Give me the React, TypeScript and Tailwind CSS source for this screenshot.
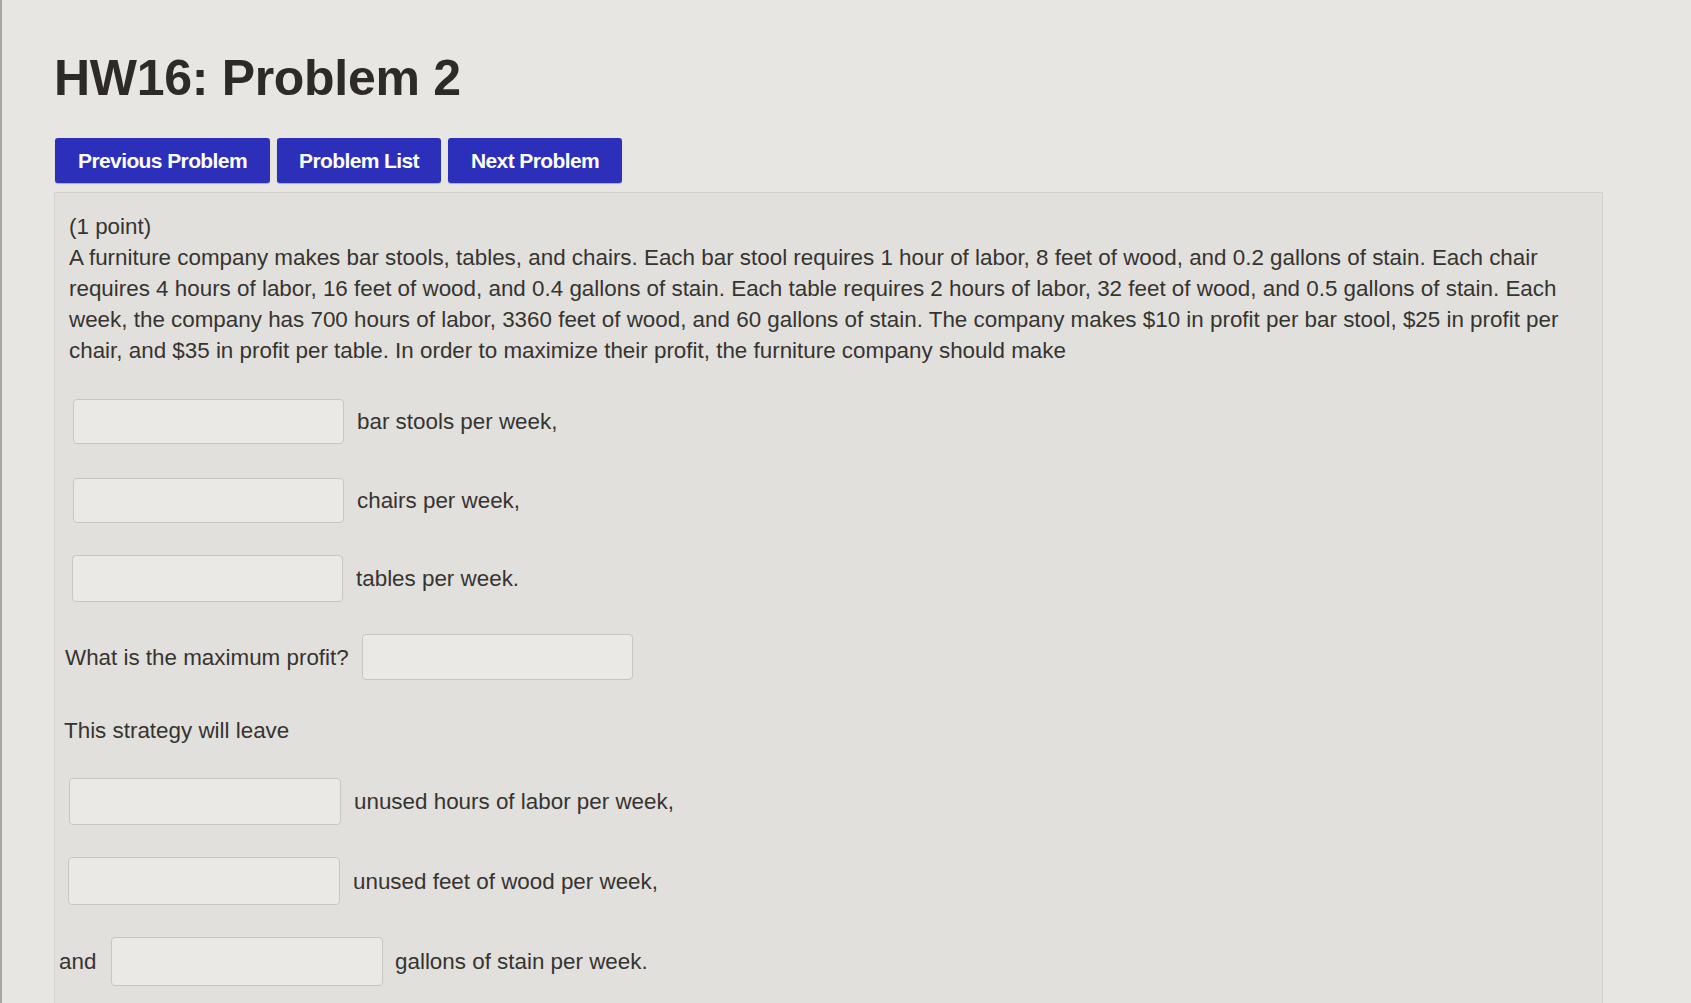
import React from "react";

const font = { fontFamily: '"Liberation Sans", Arial, Helvetica, sans-serif' };

function AnswerBox({ className = "" }: { className?: string }) {
  return (
    <input
      type="text"
      className={`h-[45px] w-[271px] shrink-0 rounded-[4px] border border-[#c8c6c2] bg-[#ebe9e5] px-2 text-[22px] text-[#333] outline-none ${className}`}
    />
  );
}

function NavButton({ label, className = "" }: { label: string; className?: string }) {
  return (
    <button
      className={`h-[45px] rounded-[3px] bg-[#2c2fb9] text-[21px] font-bold tracking-[-0.6px] text-white shadow-[0_1px_1px_rgba(0,0,0,0.25)] ${className}`}
    >
      {label}
    </button>
  );
}

export default function App() {
  return (
    <div
      style={font}
      className="h-[1003px] w-full overflow-hidden border-l-[2px] border-[#a9a7a3] bg-[#e8e6e2] pl-[52px] text-[#363431]"
    >
      <h1 className="pt-[50px] text-[50px] font-bold leading-[56px] tracking-[-0.3px] text-[#2e2a27]">
        HW16: Problem 2
      </h1>

      <div className="mt-[32px] flex gap-[7px] pl-[1px]">
        <NavButton label="Previous Problem" className="w-[215px]" />
        <NavButton label="Problem List" className="w-[164px]" />
        <NavButton label="Next Problem" className="w-[174px]" />
      </div>

      <div className="mt-[9px] h-[900px] w-[1549px] border border-[#d4d2ce] bg-[#e2e0dc] pl-[14px] pt-[18px] text-[22.4px] leading-[31px]">
        <p>(1 point)</p>
        <p>
          A furniture company makes bar stools, tables, and chairs. Each bar stool requires 1 hour of labor, 8 feet of wood, and 0.2 gallons of stain. Each chair
          <br />
          requires 4 hours of labor, 16 feet of wood, and 0.4 gallons of stain. Each table requires 2 hours of labor, 32 feet of wood, and 0.5 gallons of stain. Each
          <br />
          week, the company has 700 hours of labor, 3360 feet of wood, and 60 gallons of stain. The company makes $10 in profit per bar stool, $25 in profit per
          <br />
          chair, and $35 in profit per table. In order to maximize their profit, the furniture company should make
        </p>

        <div className="mt-[33px] flex items-center gap-[13px] pl-[4px]">
          <AnswerBox />
          <span>bar stools per week,</span>
        </div>
        <div className="mt-[34px] flex items-center gap-[13px] pl-[4px]">
          <AnswerBox />
          <span>chairs per week,</span>
        </div>
        <div className="mt-[32px] flex items-center gap-[13px] pl-[3px]">
          <AnswerBox className="h-[47px]" />
          <span>tables per week.</span>
        </div>

        <div className="-ml-[4px] mt-[32px] flex items-center gap-[13px]">
          <span>What is the maximum profit?</span>
          <AnswerBox className="h-[46px] w-[267px]" />
        </div>

        <p className="-ml-[5px] mt-[35px]">This strategy will leave</p>

        <div className="mt-[32px] flex items-center gap-[13px]">
          <AnswerBox className="h-[47px] w-[272px]" />
          <span>unused hours of labor per week,</span>
        </div>
        <div className="-ml-[1px] mt-[32px] flex items-center gap-[13px]">
          <AnswerBox className="h-[48px] w-[272px]" />
          <span>unused feet of wood per week,</span>
        </div>
        <div className="-ml-[10px] mt-[32px] flex items-center">
          <span className="w-[52px]">and</span>
          <AnswerBox className="h-[49px] w-[272px]" />
          <span className="ml-[12px]">gallons of stain per week.</span>
        </div>
      </div>
    </div>
  );
}
